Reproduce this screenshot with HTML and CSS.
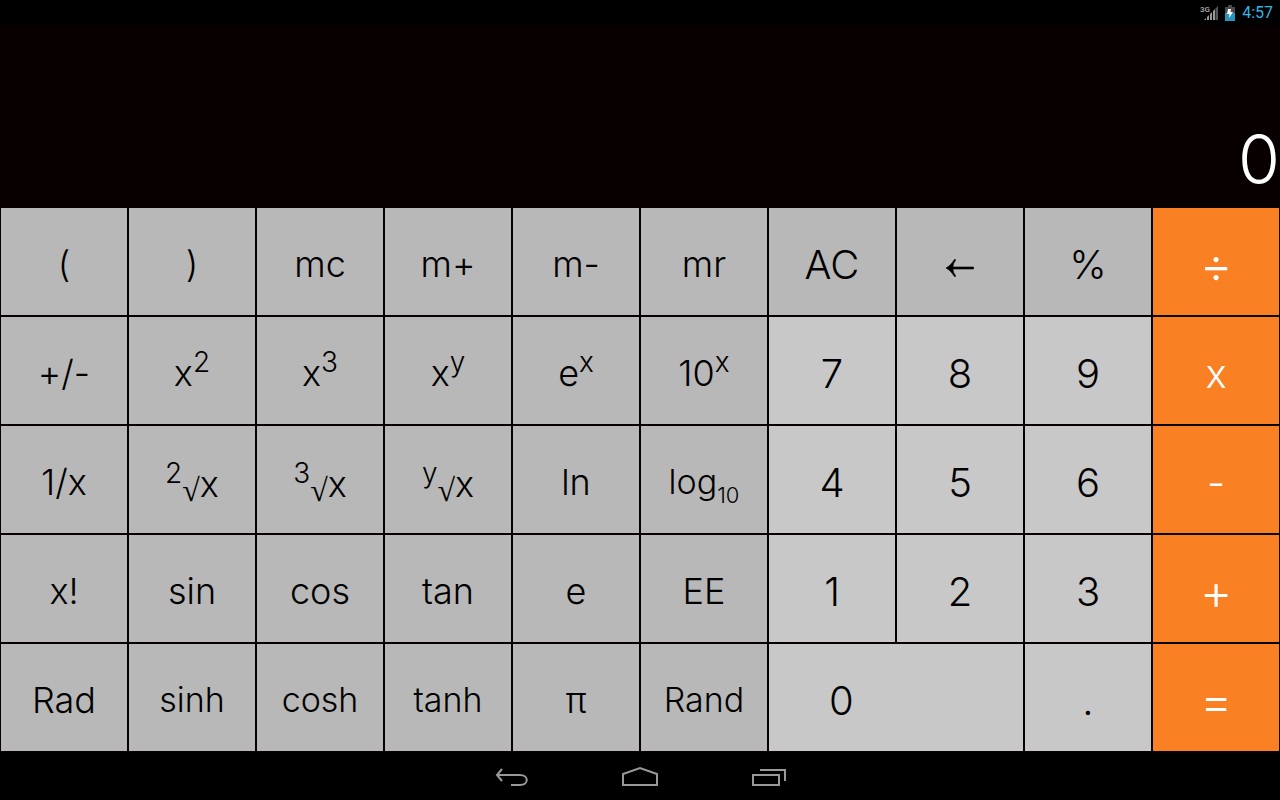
FILE: index.html
```
<!DOCTYPE html>
<html lang="en">
<head>
  <meta charset="UTF-8" />
  <meta name="viewport" content="width=device-width, initial-scale=1.0"/>
  <title>Calculator</title>
  <link rel="stylesheet" href="styles.css">
</head>
<body>

<header class="status-bar">
  <svg class="signal" width="19" height="17" viewBox="0 0 19 17" aria-hidden="true">
    <path d="M15.500 4.500L18 2V16H15.500Z" fill="#555"/>
    <path d="M4 16L6 14V16ZM7 13L9 11V16H7ZM10 10L12 8V16H10ZM13 7L15 5V16H13Z" fill="#999"/>
    <text x="0" y="8">3G</text>
  </svg>
  <svg class="battery" width="10" height="16" viewBox="0 0 10 16" aria-hidden="true">
    <path d="M3 0H7V2H10V8H0V2H3Z" fill="#4a4a4a"/>
    <path d="M0 8H10V16H0Z" fill="#2a94bd"/>
    <path d="M3 4H6L5.5 7H8L4 13L4.5 9H2Z" fill="#fff"/>
  </svg>
  <span class="clock">4:57</span>
</header>

<main class="calculator">
  <output class="display">0</output>

  <div class="keypad">
    <button class="key">(</button>
    <button class="key">)</button>
    <button class="key">mc</button>
    <button class="key">m+</button>
    <button class="key">m-</button>
    <button class="key">mr</button>
    <button class="key large">AC</button>
    <button class="key" aria-label="Backspace">
      <svg width="28" height="18" viewBox="0 0 28 18" aria-hidden="true">
        <path d="M0 9C4 7 6 4 8.500 0.500H9.500V1.500C7.500 4 7 6 7 8H27.500V10H7C7 12 7.500 14 9.500 16.500V17.500H8.500C6 14 4 11 0 9Z" stroke="#000" stroke-width="0.6"/>
      </svg>
    </button>
    <button class="key large">%</button>
    <button class="key operator symbol">÷</button>

    <button class="key">+/-</button>
    <button class="key">x<sup>2</sup></button>
    <button class="key">x<sup>3</sup></button>
    <button class="key">x<sup>y</sup></button>
    <button class="key">e<sup>x</sup></button>
    <button class="key">10<sup>x</sup></button>
    <button class="key digit">7</button>
    <button class="key digit">8</button>
    <button class="key digit">9</button>
    <button class="key operator">x</button>

    <button class="key">1/x</button>
    <button class="key root"><sup>2</sup><span class="radical">√</span>x</button>
    <button class="key root"><sup>3</sup><span class="radical">√</span>x</button>
    <button class="key root"><sup>y</sup><span class="radical">√</span>x</button>
    <button class="key">ln</button>
    <button class="key small">log<sub>10</sub></button>
    <button class="key digit">4</button>
    <button class="key digit">5</button>
    <button class="key digit">6</button>
    <button class="key operator">-</button>

    <button class="key">x!</button>
    <button class="key">sin</button>
    <button class="key">cos</button>
    <button class="key">tan</button>
    <button class="key">e</button>
    <button class="key">EE</button>
    <button class="key digit">1</button>
    <button class="key digit">2</button>
    <button class="key digit">3</button>
    <button class="key operator symbol">+</button>

    <button class="key">Rad</button>
    <button class="key small">sinh</button>
    <button class="key small">cosh</button>
    <button class="key small">tanh</button>
    <button class="key">π</button>
    <button class="key small">Rand</button>
    <button class="key digit zero">0</button>
    <button class="key digit">.</button>
    <button class="key operator symbol">=</button>
  </div>
</main>

<nav class="nav-bar">
  <button class="nav-button" aria-label="Back">
    <svg width="36" height="24" viewBox="0 0 36 24">
      <path d="M3 9H26C35 9 35 19 26 19H17M8 3L3 9L8 15"/>
    </svg>
  </button>
  <button class="nav-button" aria-label="Home">
    <svg width="36" height="24" viewBox="0 0 36 24">
      <path d="M1 19V8L18 2L35 8V19Z"/>
    </svg>
  </button>
  <button class="nav-button" aria-label="Recent apps">
    <svg width="36" height="24" viewBox="0 0 36 24">
      <path d="M3 9H29V19H3ZM10 4H35V15"/>
    </svg>
  </button>
</nav>

</body>
</html>
```

FILE: styles.css
```
* {
  box-sizing: border-box;
}
body {
  margin: 0;
  min-height: 100vh;
  display: flex;
  flex-direction: column;
  background: #000;
  font-family: Inter, "Liberation Sans", sans-serif;
  font-weight: 300;
}
button {
  margin: 0;
  padding: 0;
  border: none;
  font: inherit;
  cursor: pointer;
}
.status-bar {
  height: 25px;
  padding: 0 7px;
  display: flex;
  justify-content: flex-end;
  align-items: center;
}
.signal {
  margin-right: 6px;
}
.signal text {
  font: bold 8px Roboto, sans-serif;
  fill: #999;
}
.battery {
  margin-right: 7px;
}
.clock {
  color: #33b5e5;
  font: 400 16px Roboto, sans-serif;
}
.calculator {
  flex: 1;
  display: flex;
  flex-direction: column;
  background: #080000;
}
.display {
  height: 182px;
  padding-bottom: 5px;
  display: flex;
  justify-content: flex-end;
  align-items: flex-end;
  color: #fff;
  font-size: 68px;
  line-height: 86px;
}
.keypad {
  flex: 1;
  padding: 1px;
  display: grid;
  grid-template-columns: repeat(10, 1fr);
  grid-auto-rows: 1fr;
  gap: 2px;
}
.key {
  min-height: 48px;
  padding-top: 4px;
  background: #b8b8b8;
  color: #000;
  font-size: 36px;
}
.key:active {
  background: #a0a0a0;
}
.key.small {
  font-size: 34px;
}
.key.large,
.key.digit,
.key.operator {
  padding-top: 6px;
  font-size: 40px;
}
.key.digit {
  background: #c8c8c8;
}
.key.operator {
  background: #f98023;
  color: #fff;
}
.key.symbol {
  font-size: 50px;
}
.key.zero {
  grid-column: span 2;
  padding-left: 60px;
  text-align: left;
}
.key sup,
.key sub {
  font-size: 28px;
  line-height: 0;
  vertical-align: 14px;
}
.key sub {
  font-size: 22px;
  vertical-align: -9px;
}
.key.root {
  padding-top: 8px;
}
.radical {
  font-family: "Liberation Serif", serif;
  font-size: 32px;
  line-height: 0;
  vertical-align: -4px;
}
.nav-bar {
  height: 48px;
  padding-top: 3px;
  display: flex;
  justify-content: center;
  align-items: center;
  gap: 92px;
}
.nav-button {
  background: none;
  line-height: 0;
}
.nav-button svg {
  fill: none;
  stroke: #999;
  stroke-width: 2;
}
```
